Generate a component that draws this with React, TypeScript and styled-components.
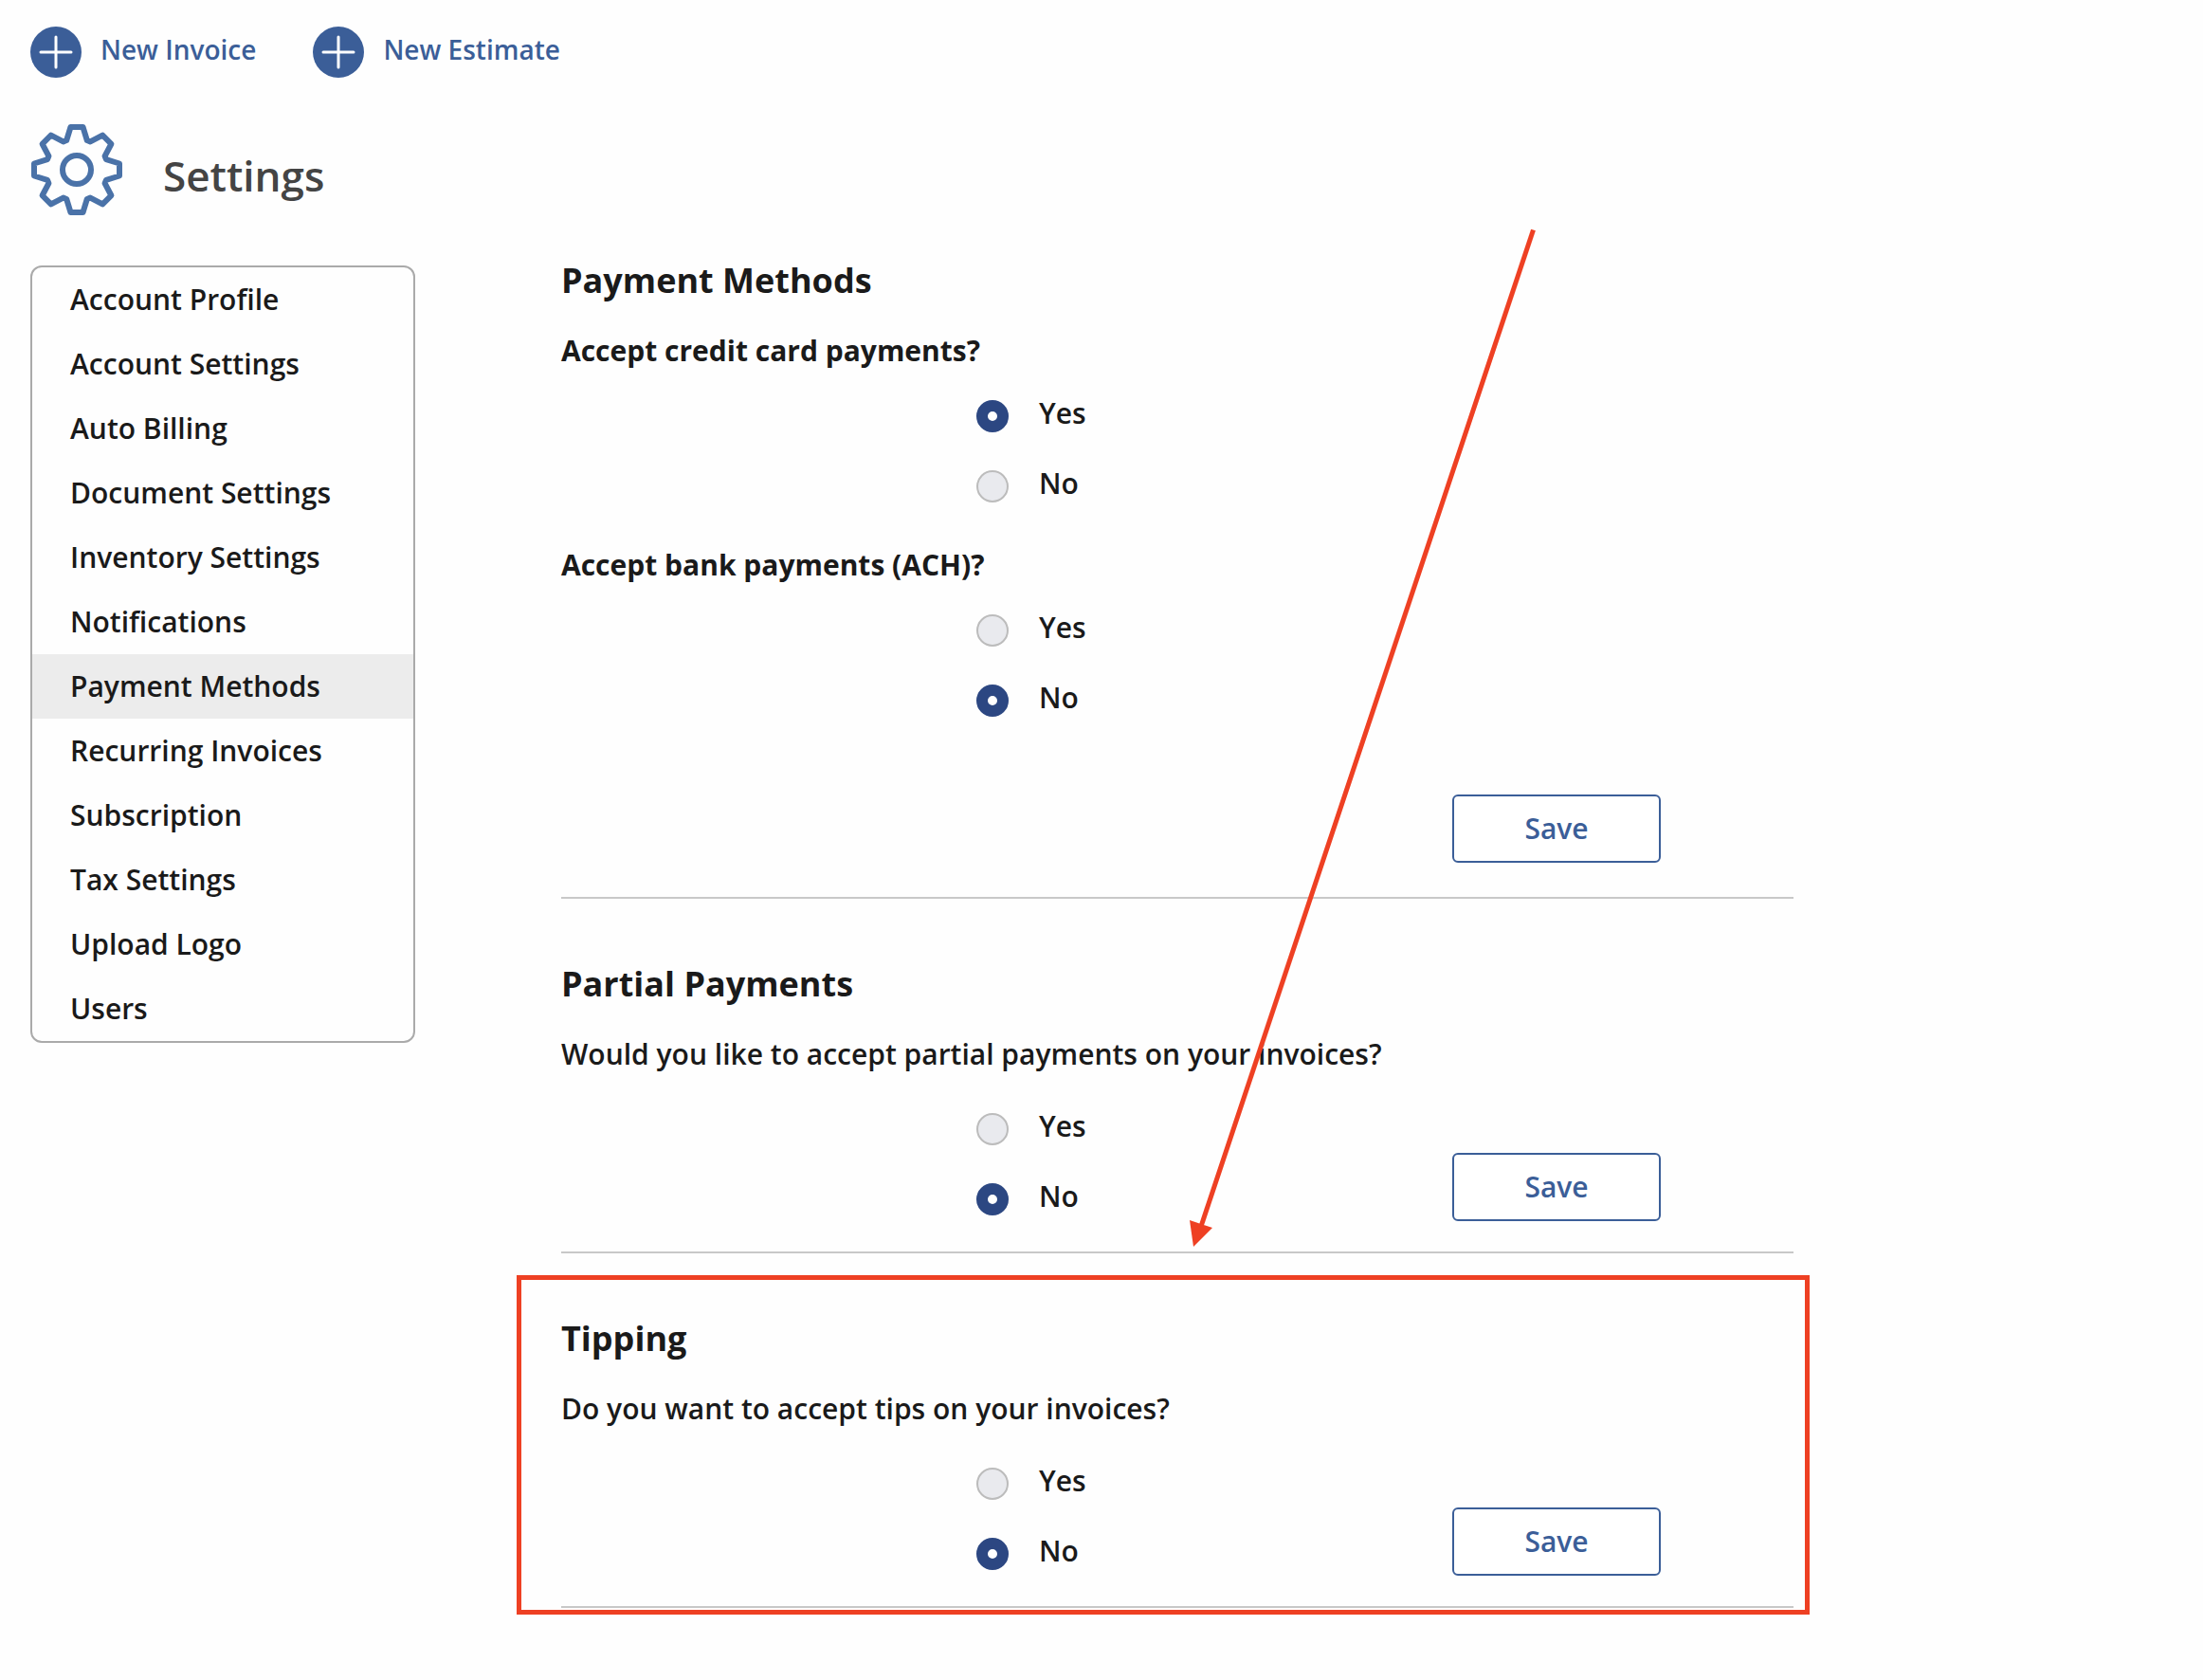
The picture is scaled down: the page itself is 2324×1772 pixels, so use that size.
import React from "react";
import styled, { createGlobalStyle } from "styled-components";

const GlobalStyle = createGlobalStyle`
  *, *::before, *::after { box-sizing: border-box; }
  html, body { height: 100%; }
  body {
    margin: 0;
    background: #fefefe;
    color: #1a1a1a;
    font-family: "Open Sans", "Noto Sans", sans-serif;
    font-size: 30px;
    font-weight: 600;
    line-height: 40px;
  }
  #root { height: 100%; }
`;

const Page = styled.div`
  position: relative;
  height: 100%;
  overflow: hidden;
  padding: 28px 32px 0;
`;

const QuickActions = styled.nav`
  display: flex;
  gap: 60px;
`;

const QuickLink = styled.a`
  display: flex;
  align-items: center;
  gap: 20px;
  color: #3b5e98;
  font-size: 28px;
  text-decoration: none;
  svg { display: block; width: 54px; height: 54px; }
  span { padding-bottom: 6px; }
`;

const PageHeader = styled.header`
  display: flex;
  align-items: center;
  gap: 42px;
  margin-top: 48px;
`;

const GearIcon = styled.svg`
  width: 98px;
  height: 98px;
`;

const PageTitle = styled.h1`
  margin: 0;
  padding-top: 12px;
  color: #444;
  font-size: 44px;
  line-height: 60px;
  font-weight: 600;
`;

const Columns = styled.div`
  display: flex;
  align-items: flex-start;
  gap: 154px;
  margin-top: 52px;
`;

const Menu = styled.nav`
  flex: 0 0 406px;
  border: 2px solid #aaa;
  border-radius: 12px;
  overflow: hidden;
`;

const MenuLink = styled.a<{ $active?: boolean }>`
  display: block;
  padding: 14px 40px;
  color: inherit;
  text-decoration: none;
  background: ${(p) => (p.$active ? "#ececec" : "transparent")};
`;

const Content = styled.main`
  flex: 0 1 1300px;
`;

const Section = styled.section`
  position: relative;
  border-bottom: 2px solid #c8c8c8;
  padding-bottom: 32px;
  &:first-child { padding-bottom: 36px; }
  & + & { padding-top: 74px; }
`;

const SectionTitle = styled.h2`
  margin: 0 0 38px;
  font-size: 36px;
  line-height: 32px;
  font-weight: 700;
`;

const Group = styled.fieldset<{ $bold?: boolean; $spaced?: boolean }>`
  margin: 0 0 ${(p) => (p.$spaced ? "46px" : "0")};
  border: 0;
  padding: 0;
  min-width: 0;
  legend {
    padding: 0;
    font-weight: ${(p) => (p.$bold ? 700 : 600)};
    margin-bottom: ${(p) => (p.$bold ? "26px" : "36px")};
  }
`;

const Options = styled.div`
  display: grid;
  gap: 34px;
  padding-left: 438px;
`;

const Option = styled.label`
  display: flex;
  align-items: center;
  gap: 32px;
`;

const Radio = styled.input`
  appearance: none;
  flex: none;
  width: 34px;
  height: 34px;
  margin: 6px 0 0;
  border: 2px solid #bcbcbc;
  border-radius: 50%;
  background: #e9eaee;
  &:checked {
    border: 12px solid #2c4782;
    background: #fff;
  }
`;

const ActionRow = styled.div<{ $overlap?: boolean }>`
  display: flex;
  justify-content: flex-end;
  padding-right: 140px;
  margin-top: ${(p) => (p.$overlap ? "-66px" : "82px")};
`;

const SaveButton = styled.button`
  width: 220px;
  height: 72px;
  border: 2px solid #3b5e98;
  border-radius: 6px;
  background: #fff;
  color: #3b5e98;
  font: inherit;
`;

const Highlight = styled.div`
  position: absolute;
  inset: 23px -17px -9px -47px;
  border: 5px solid #ee4023;
  pointer-events: none;
`;

const Pointer = styled.svg`
  position: absolute;
  left: 1250px;
  top: 240px;
  width: 380px;
  height: 1080px;
  pointer-events: none;
`;

const menuItems = [
  "Account Profile",
  "Account Settings",
  "Auto Billing",
  "Document Settings",
  "Inventory Settings",
  "Notifications",
  "Payment Methods",
  "Recurring Invoices",
  "Subscription",
  "Tax Settings",
  "Upload Logo",
  "Users",
];

function PlusIcon() {
  return (
    <svg viewBox="0 0 54 54" aria-hidden="true">
      <circle cx="27" cy="27" r="27" fill="#3b5e98" />
      <path d="M27 11v32M11 27h32" stroke="#fff" strokeWidth="3" strokeLinecap="round" />
    </svg>
  );
}

/* Eight-toothed gear outline: each tooth is the same shape turned by 45 degrees. */
function gearPath() {
  const tooth: [number, number][] = [
    [-10.8, -31],
    [-6.5, -45],
    [6.5, -45],
    [10.8, -31],
  ];
  const points: string[] = [];
  for (let i = 0; i < 8; i++) {
    const a = (i * Math.PI) / 4;
    for (const [x, y] of tooth) {
      const px = 49 + x * Math.cos(a) - y * Math.sin(a);
      const py = 49 + x * Math.sin(a) + y * Math.cos(a);
      points.push(`${px.toFixed(2)} ${py.toFixed(2)}`);
    }
  }
  return `M${points.join("L")}Z`;
}

function YesNo({
  name,
  question,
  value,
  bold,
  spaced,
}: {
  name: string;
  question: string;
  value: "Yes" | "No";
  bold?: boolean;
  spaced?: boolean;
}) {
  return (
    <Group $bold={bold} $spaced={spaced}>
      <legend>{question}</legend>
      <Options>
        {["Yes", "No"].map((option) => (
          <Option key={option}>
            <Radio type="radio" name={name} value={option} defaultChecked={option === value} />
            {option}
          </Option>
        ))}
      </Options>
    </Group>
  );
}

export default function App() {
  return (
    <Page>
      <GlobalStyle />
      <QuickActions aria-label="Create">
        <QuickLink href="#new-invoice"><PlusIcon /><span>New Invoice</span></QuickLink>
        <QuickLink href="#new-estimate"><PlusIcon /><span>New Estimate</span></QuickLink>
      </QuickActions>
      <PageHeader>
        <GearIcon viewBox="0 0 98 98" fill="none" stroke="#4a72a8" strokeWidth="6" strokeLinejoin="round" aria-hidden="true">
          <path d={gearPath()} />
          <circle cx="49" cy="49" r="15" />
        </GearIcon>
        <PageTitle>Settings</PageTitle>
      </PageHeader>
      <Columns>
        <Menu aria-label="Settings">
          {menuItems.map((item) => (
            <MenuLink key={item} href="#settings" $active={item === "Payment Methods"}>{item}</MenuLink>
          ))}
        </Menu>
        <Content>
          <Section>
            <SectionTitle>Payment Methods</SectionTitle>
            <YesNo name="card" question="Accept credit card payments?" value="Yes" bold spaced />
            <YesNo name="ach" question="Accept bank payments (ACH)?" value="No" bold />
            <ActionRow><SaveButton type="button">Save</SaveButton></ActionRow>
          </Section>
          <Section>
            <SectionTitle>Partial Payments</SectionTitle>
            <YesNo name="partial" question="Would you like to accept partial payments on your invoices?" value="No" />
            <ActionRow $overlap><SaveButton type="button">Save</SaveButton></ActionRow>
          </Section>
          <Section>
            <SectionTitle>Tipping</SectionTitle>
            <YesNo name="tipping" question="Do you want to accept tips on your invoices?" value="No" />
            <ActionRow $overlap><SaveButton type="button">Save</SaveButton></ActionRow>
            <Highlight />
          </Section>
          <Section>
            <SectionTitle>Invoices</SectionTitle>
          </Section>
        </Content>
      </Columns>
      <Pointer viewBox="0 0 380 1080" aria-hidden="true">
        <path d="M367.5 2.5L17.5 1052" stroke="#ee4023" strokeWidth="5" />
        <path d="M5 1047L29 1055L9 1075Z" fill="#ee4023" />
      </Pointer>
    </Page>
  );
}
